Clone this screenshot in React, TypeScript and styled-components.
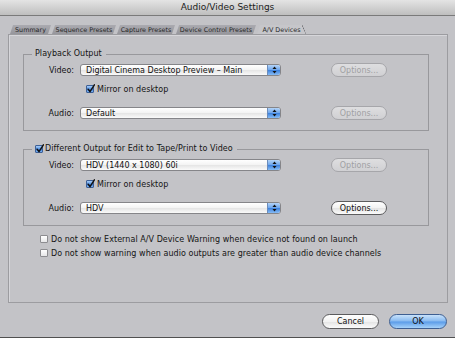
import React from 'react';
import styled, { createGlobalStyle, css } from 'styled-components';

const Global = createGlobalStyle`
  html, body { margin: 0; padding: 0; background: #c3c3c7; }
  body { font-family: "DejaVu Sans", "Liberation Sans", sans-serif; }
  * { box-sizing: border-box; }
`;

const Window = styled.div`
  width: 455px;
  height: 338px;
  background: #c3c3c7;
  display: flex;
  flex-direction: column;
  border-bottom: 1px solid #505050;
  overflow: hidden;
`;

const TitleBar = styled.div`
  height: 16px;
  flex: none;
  border-bottom: 1px solid #7a7a7a;
  background: linear-gradient(#e4e4e4, #bebebe);
  display: flex;
  align-items: center;
  justify-content: center;
  font-size: 9px;
  color: #1c1c1c;
  padding-bottom: 1px;
`;

const Body = styled.div`
  flex: 1;
  display: flex;
  flex-direction: column;
  padding: 9px 8px 0 8px;
`;

const TabStrip = styled.div`
  display: flex;
  height: 9px;
  padding-left: 2px;
`;

const Tab = styled.div<{ $w: number; $active?: boolean }>`
  width: ${p => p.$w}px;
  height: 9px;
  font-size: 6.4px;
  color: #262626;
  display: flex;
  align-items: center;
  justify-content: center;
  white-space: nowrap;
  margin-right: 1px;
  position: relative;
  ${p =>
    p.$active
      ? css`
          background: #c6c6ca;
          clip-path: polygon(3px 0, calc(100% - 3px) 0, 100% 100%, 0 100%);
          &::after {
            content: '';
            position: absolute;
            right: 0;
            top: 0;
            width: 4px;
            height: 9px;
            background: linear-gradient(to top right, transparent calc(50% - 0.6px), #6a6a6e 50%, transparent calc(50% + 0.6px));
          }
        `
      : css`
          background: linear-gradient(#aaaab0, #96969c);
          clip-path: polygon(3px 0, 100% 0, calc(100% - 3px) 100%, 0 100%);
        `}
`;

const Panel = styled.div`
  width: 440px;
  height: 269px;
  border: 1px solid #9c9ca0;
  box-shadow: inset 1px 1px 0 #d6d6da;
  padding: 14px 18px 0 14px;
  display: flex;
  flex-direction: column;
`;

const Group = styled.fieldset<{ $top?: number }>`
  margin: ${p => p.$top ?? 0}px 0 0 0;
  padding: 3px 0 9px 0;
  border: 1px solid #98989c;
  min-inline-size: 0;
`;

const Legend = styled.legend`
  margin-left: 8px;
  padding: 0 4px 0 3px;
  height: 10px;
  line-height: 10px;
  font-size: 8px;
  letter-spacing: 0.05px;
  color: #141414;
  display: flex;
  align-items: center;
  gap: 2px;
  white-space: nowrap;
`;

const Row = styled.div<{ $gap?: number }>`
  display: grid;
  grid-template-columns: 50px 201px 100px;
  column-gap: 6px;
  align-items: center;
  height: 16px;
  margin-top: ${p => p.$gap ?? 0}px;
`;

const Label = styled.span`
  font-size: 8px;
  color: #141414;
  text-align: right;
`;

const Popup = styled.div`
  height: 12px;
  border: 1px solid #858589;
  border-radius: 3px;
  background: linear-gradient(#ffffff, #f4f4f4 45%, #e6e6e6 55%, #fafafa);
  display: flex;
  align-items: center;
  overflow: hidden;
`;

const PopupText = styled.span`
  flex: 1;
  padding-left: 5px;
  font-size: 8px;
  color: #111;
  white-space: nowrap;
`;

const PopupArrows = styled.span`
  width: 13px;
  height: 100%;
  background: linear-gradient(#b4d4f8, #6ea6ec 48%, #3c80dc 52%, #86bcf6);
  border-left: 1px solid #6a8cbc;
  display: flex;
  align-items: center;
  justify-content: center;
`;

type BtnKind = 'disabled' | 'normal' | 'default';

const PillButton = styled.button<{ $kind: BtnKind; $w?: number; $h?: number }>`
  width: ${p => p.$w ?? 56}px;
  height: ${p => p.$h ?? 14}px;
  border-radius: 8px;
  font-family: inherit;
  font-size: 8px;
  padding: 0;
  justify-self: end;
  ${p =>
    p.$kind === 'disabled'
      ? css`
          border: 1px solid #a6a6aa;
          background: linear-gradient(#dedee0, #d0d0d3);
          color: #a0a0a3;
        `
      : p.$kind === 'normal'
      ? css`
          border: 1px solid #5c5c5e;
          background: linear-gradient(#ffffff, #f2f2f2 50%, #e4e4e4 52%, #fbfbfb);
          color: #111;
        `
      : css`
          border: 1px solid #3e5f92;
          background: linear-gradient(#c9e2fb, #86b9f0 48%, #5a9be8 52%, #a6d2fa);
          color: #111;
        `}
`;

const CheckLine = styled.label<{ $indent?: number }>`
  display: flex;
  align-items: center;
  gap: 3px;
  font-size: 8px;
  letter-spacing: 0.05px;
  color: #141414;
  margin-left: ${p => p.$indent ?? 0}px;
  white-space: nowrap;
`;

const Box = styled.span<{ $checked?: boolean }>`
  width: 8px;
  height: 8px;
  flex: none;
  border-radius: 1px;
  position: relative;
  border: 1px solid ${p => (p.$checked ? '#3d5f96' : '#8c8c90')};
  background: ${p =>
    p.$checked
      ? 'linear-gradient(#a8cdf6, #5594e6 50%, #3b7cd8 52%, #7ab2f2)'
      : 'linear-gradient(#ffffff, #e6e6e8)'};
`;

const Tick = styled.svg`
  position: absolute;
  left: 0px;
  top: -2px;
  width: 8px;
  height: 9px;
`;

const CheckList = styled.div`
  display: flex;
  flex-direction: column;
  margin-top: 6px;
  padding-left: 17px;
`;

const CheckItem = styled.div`
  height: 14px;
  display: flex;
  align-items: center;
`;

const ButtonBar = styled.div`
  display: flex;
  justify-content: flex-end;
  gap: 10px;
  margin-top: 11px;
`;

const Check = ({ checked }: { checked?: boolean }) => (
  <Box $checked={checked}>
    {checked && (
      <Tick viewBox="0 0 8 9">
        <path d="M1.2 5.2 L3 7.6 L7.4 0.8" fill="none" stroke="#111" strokeWidth="1.5" strokeLinecap="round" strokeLinejoin="round" />
      </Tick>
    )}
  </Box>
);

const Arrows = () => (
  <PopupArrows>
    <svg width="5" height="8" viewBox="0 0 5 8">
      <path d="M2.5 0.5 L4.5 3 L0.5 3 Z" fill="#111" />
      <path d="M2.5 7.5 L4.5 5 L0.5 5 Z" fill="#111" />
    </svg>
  </PopupArrows>
);

const Select = ({ value }: { value: string }) => (
  <Popup>
    <PopupText>{value}</PopupText>
    <Arrows />
  </Popup>
);

const OutputRows = ({ video, audio, audioOptions }: { video: string; audio: string; audioOptions: BtnKind }) => (
  <>
    <Row>
      <Label>Video:</Label>
      <Select value={video} />
      <PillButton $kind="disabled">Options...</PillButton>
    </Row>
    <Row $gap={3}>
      <span />
      <CheckLine $indent={6}>
        <Check checked />
        Mirror on desktop
      </CheckLine>
      <span />
    </Row>
    <Row $gap={8}>
      <Label>Audio:</Label>
      <Select value={audio} />
      <PillButton $kind={audioOptions}>Options...</PillButton>
    </Row>
  </>
);

export default function App() {
  return (
    <>
      <Global />
      <Window>
        <TitleBar>Audio/Video Settings</TitleBar>
        <Body>
          <TabStrip>
            <Tab $w={41}>Summary</Tab>
            <Tab $w={64}>Sequence Presets</Tab>
            <Tab $w={58}>Capture Presets</Tab>
            <Tab $w={80}>Device Control Presets</Tab>
            <Tab $w={49} $active>A/V Devices</Tab>
          </TabStrip>
          <Panel>
            <Group>
              <Legend>Playback Output</Legend>
              <OutputRows video="Digital Cinema Desktop Preview – Main" audio="Default" audioOptions="disabled" />
            </Group>
            <Group $top={13}>
              <Legend>
                <Check checked />
                Different Output for Edit to Tape/Print to Video
              </Legend>
              <OutputRows video="HDV (1440 x 1080) 60i" audio="HDV" audioOptions="normal" />
            </Group>
            <CheckList>
              <CheckItem>
                <CheckLine>
                  <Check />
                  Do not show External A/V Device Warning when device not found on launch
                </CheckLine>
              </CheckItem>
              <CheckItem>
                <CheckLine>
                  <Check />
                  Do not show warning when audio outputs are greater than audio device channels
                </CheckLine>
              </CheckItem>
            </CheckList>
          </Panel>
          <ButtonBar>
            <PillButton $kind="normal" $w={57} $h={15}>Cancel</PillButton>
            <PillButton $kind="default" $w={58} $h={15}>OK</PillButton>
          </ButtonBar>
        </Body>
      </Window>
    </>
  );
}
